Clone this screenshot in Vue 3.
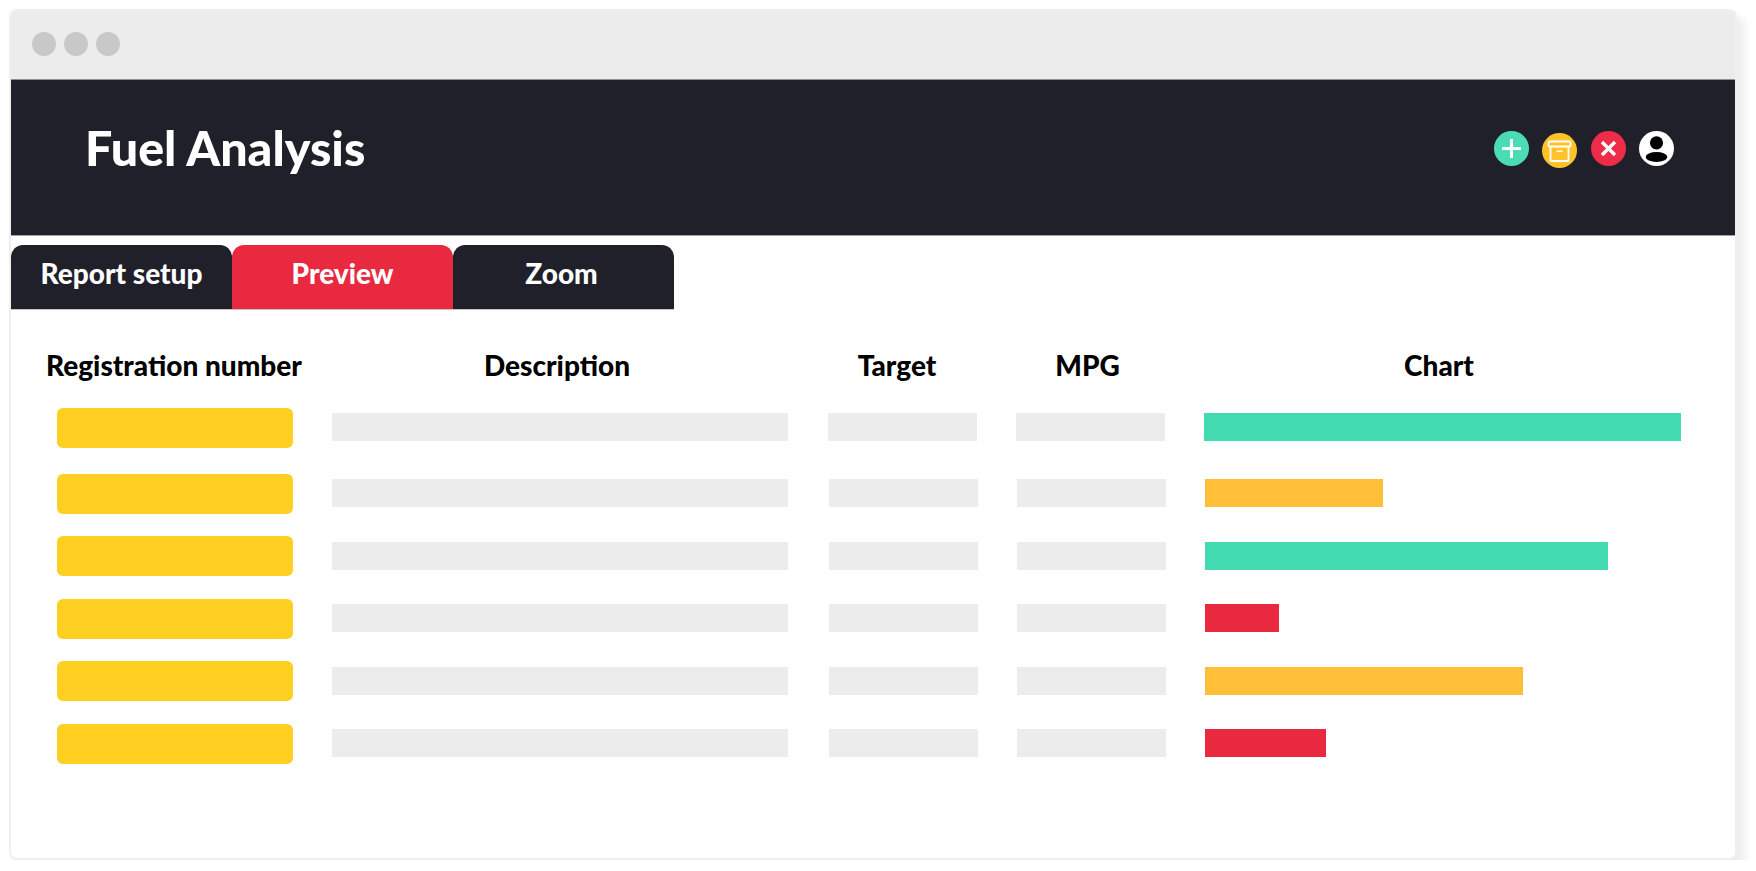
<template>
  <div class="window">
    <div class="chrome">
      <span class="dot"></span>
      <span class="dot"></span>
      <span class="dot"></span>
    </div>

    <header class="header">
      <h1 class="title">Fuel Analysis</h1>
      <div class="icons">
        <svg class="icon" viewBox="0 0 35 35">
          <circle cx="17.5" cy="17.5" r="17.5" fill="#4bdcb5" />
          <path d="M17.5 8v19M8 17.5h19" stroke="#fff" stroke-width="3" fill="none" />
        </svg>
        <svg class="icon icon-archive" viewBox="0 0 35 35">
          <circle cx="17.5" cy="17.5" r="17.5" fill="#ffc329" />
          <rect x="6.5" y="8.5" width="22" height="5" rx="1" stroke="#fff" stroke-width="1.8" fill="none" />
          <path d="M8.5 13.5V28h18V13.5" stroke="#fff" stroke-width="1.8" fill="none" />
          <path d="M14.5 18.3h6" stroke="#fff" stroke-width="1.6" fill="none" />
        </svg>
        <svg class="icon" viewBox="0 0 35 35">
          <circle cx="17.5" cy="17.5" r="17.5" fill="#ee2c48" />
          <path d="M11 11l13 13M24 11L11 24" stroke="#fff" stroke-width="3.4" fill="none" />
        </svg>
        <svg class="icon" viewBox="0 0 35 35">
          <circle cx="17.5" cy="17.5" r="17.5" fill="#fff" />
          <circle cx="17.5" cy="11.8" r="6.6" fill="#000" />
          <ellipse cx="17.5" cy="26" rx="10.8" ry="5" fill="#000" />
        </svg>
      </div>
    </header>

    <nav class="tabs">
      <div class="tab">Report setup</div>
      <div class="tab active">Preview</div>
      <div class="tab tab-zoom">Zoom</div>
    </nav>

    <section class="table">
      <div class="head">
        <div>Registration number</div>
        <div>Description</div>
        <div>Target</div>
        <div>MPG</div>
        <div>Chart</div>
      </div>
      <div class="rows">
        <div v-for="(row, i) in rows" :key="i" class="row" :class="{ first: i === 0 }">
          <div class="plate"></div>
          <div class="bar desc"></div>
          <div class="bar small"></div>
          <div class="bar small"></div>
          <div class="bar chart" :class="row.color" :style="{ width: row.width + 'px' }"></div>
        </div>
      </div>
    </section>
  </div>
</template>

<script setup>
const rows = [
  { color: 'green', width: 477 },
  { color: 'orange', width: 178 },
  { color: 'green', width: 403 },
  { color: 'red', width: 74 },
  { color: 'orange', width: 318 },
  { color: 'red', width: 121 },
]
</script>

<style>
body {
  background: #fff;
}
</style>

<style scoped>
.window {
  box-sizing: border-box;
  width: 1728px;
  height: 851px;
  margin: 9px 0 0 9px;
  border: 2px solid #efefef;
  border-radius: 8px;
  background: #fff;
  box-shadow: 8px 8px 8px rgba(0, 0, 0, 0.07);
  font-family: Lato, "Liberation Sans", sans-serif;
  overflow: hidden;
}
.chrome {
  display: flex;
  align-items: center;
  gap: 8px;
  box-sizing: border-box;
  height: 68px;
  padding: 0 0 2px 21px;
  background: #ececec;
}
.dot {
  width: 24px;
  height: 24px;
  border-radius: 50%;
  background: #c8c8c8;
}
.header {
  display: flex;
  align-items: center;
  justify-content: space-between;
  box-sizing: border-box;
  height: 157px;
  padding: 0 61px 20px 74px;
  border-top: 1px solid #8f9097;
  border-bottom: 1px solid #a0a1a8;
  background: #1f202a;
  color: #fff;
}
.title {
  margin: 0 0 1px;
  font-size: 48.4px;
  font-weight: 900;
  line-height: 56px;
}
.icons {
  display: flex;
  align-items: center;
  gap: 13.5px;
  margin-top: 2px;
}
.icon {
  display: block;
  width: 35px;
  height: 35px;
}
.icon-archive {
  margin-top: 3px;
}
.tabs {
  display: flex;
  margin-top: 9px;
}
.tab {
  box-sizing: border-box;
  width: 221px;
  height: 65px;
  padding-bottom: 8px;
  border-radius: 12px 12px 0 0;
  border-bottom: 1px solid #c4c4c8;
  background: #1f202a;
  color: #fff;
  font-size: 28px;
  font-weight: 900;
  line-height: 56px;
  text-align: center;
}
.tab.active {
  background: #e8293f;
}
.tab-zoom {
  padding-right: 4px;
}
.table {
  padding-top: 35px;
}
.head {
  display: grid;
  grid-template-columns: 254px 514px 166px 215px 488px;
  padding-left: 35px;
  font-size: 28px;
  font-weight: 900;
  line-height: 40px;
  text-align: center;
  color: #000;
  white-space: nowrap;
}
.rows {
  display: flex;
  flex-direction: column;
  gap: 22.9px;
  margin-top: 23px;
  padding-left: 46px;
}
.row {
  display: grid;
  grid-template-columns: 236px 458px 149px 149px 1fr;
  column-gap: 39px;
  height: 39.6px;
}
.row.first {
  grid-template-columns: 236px 457px 149px 149px 1fr;
  margin-bottom: 3.5px;
}
.plate {
  border-radius: 6px;
  background: #ffcf22;
}
.bar {
  height: 28px;
  margin-top: 5.4px;
  background: #ececec;
}
.desc {
  width: 456px;
}
.chart.green {
  background: #42dbb1;
}
.chart.orange {
  background: #ffbf38;
}
.chart.red {
  background: #e8293f;
}
</style>
